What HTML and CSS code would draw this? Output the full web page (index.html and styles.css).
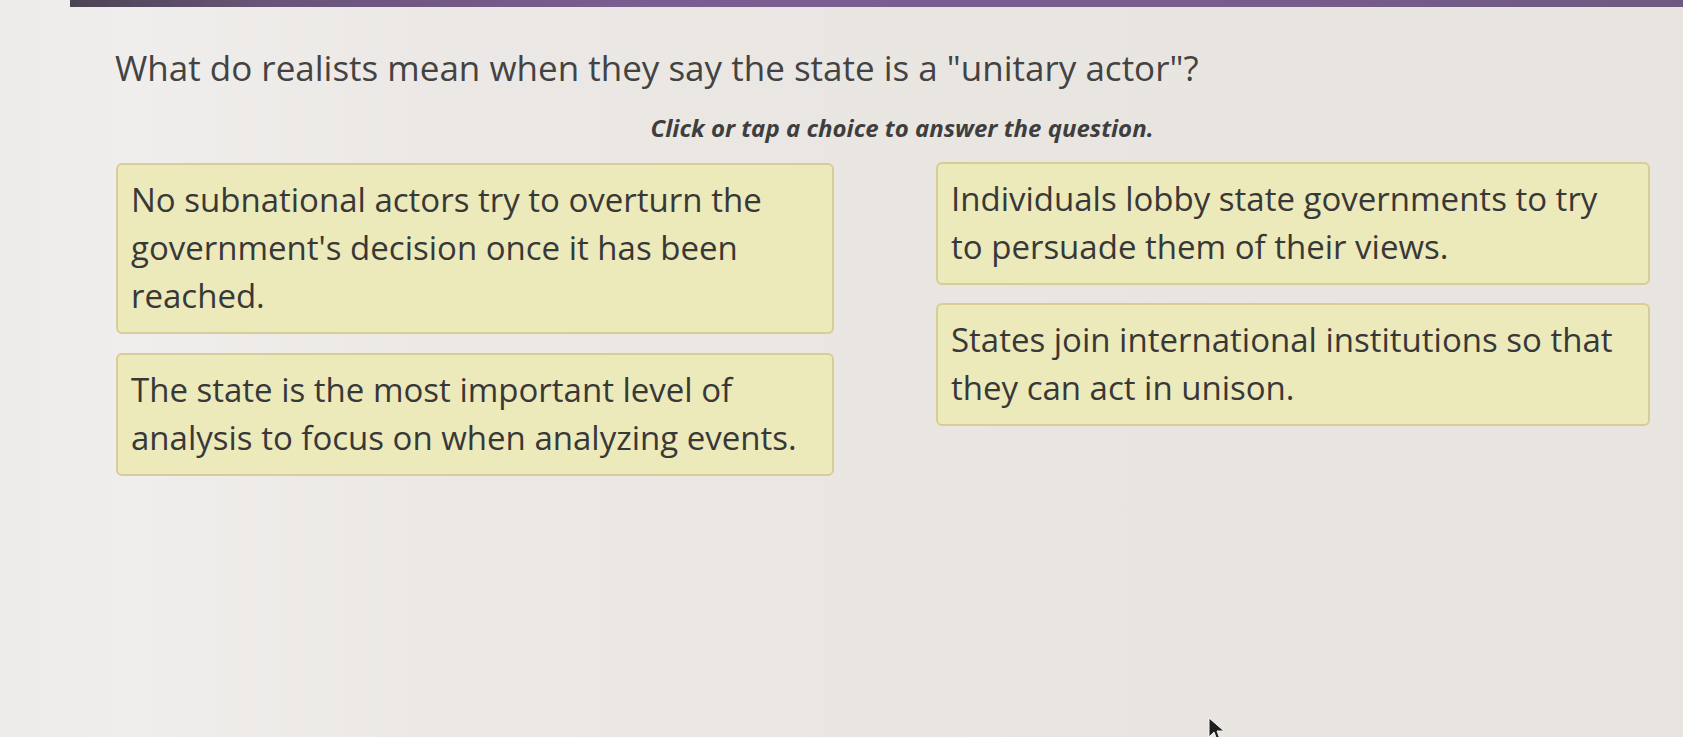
FILE: index.html
```html
<!DOCTYPE html>
<html lang="en">
<head>
<meta charset="utf-8">
<title>Question</title>
<link rel="stylesheet" href="styles.css">
</head>
<body>
<div class="topbar"></div>
<main class="page">
  <h1 class="question">What do realists mean when they say the state is a "unitary actor"?</h1>
  <p class="hint">Click or tap a choice to answer the question.</p>
  <div class="choices">
    <div class="column left">
      <div class="choice">No subnational actors try to overturn the government's decision once it has been reached.</div>
      <div class="choice">The state is the most important level of analysis to focus on when analyzing events.</div>
    </div>
    <div class="column right">
      <div class="choice">Individuals lobby state governments to try to persuade them of their views.</div>
      <div class="choice">States join international institutions so that they can act in unison.</div>
    </div>
  </div>
</main>
<svg class="cursor" width="20" height="24" viewBox="0 0 20 24"><path d="M2 1 L2 20 L7 15 L10 23 L13 22 L10 14 L17 14 Z" fill="#1e1e1e" stroke="#f4f4f4" stroke-width="1"/></svg>
</body>
</html>
```

FILE: styles.css
```css
html, body {
  margin: 0;
  padding: 0;
  height: 100%;
}
body {
  background: linear-gradient(90deg, #eeecea 0%, #f0eeec 8%, #ebe8e5 25%, #e9e6e2 60%, #e8e5e1 100%);
  font-family: "Open Sans", "Liberation Sans", sans-serif;
  color: #3a3a3a;
  overflow: hidden;
  position: relative;
}
.topbar {
  height: 7px;
  margin-left: 70px;
  background: linear-gradient(90deg, #4c4454 0%, #6a5478 12%, #7c5d92 35%, #7a5c8f 70%, #6e5a80 100%);
}
.page {
  padding-left: 116px;
  width: 1534px;
}
.question {
  margin: 41px 0 0 -1px;
  font-size: 35px;
  line-height: 40px;
  font-weight: 400;
  color: #434343;
}
.hint {
  margin: 26px 0 0 0;
  padding-left: 38px;
  text-align: center;
  font-size: 24px;
  line-height: 28px;
  font-weight: 700;
  font-style: italic;
  color: #3e3e3e;
}
.choices {
  margin-top: 21px;
  display: grid;
  grid-template-columns: 718px 714px;
  column-gap: 102px;
  align-items: start;
}
.column {
  display: flex;
  flex-direction: column;
  gap: 19px;
}
.right {
  margin-top: -1px;
  gap: 18px;
}
.choice {
  background: #ece9ba;
  border: 2px solid #d8cc97;
  border-radius: 6px;
  padding: 11px 13px 12px;
  font-size: 33px;
  line-height: 48px;
  color: #383838;
}
.cursor {
  position: absolute;
  left: 1207px;
  top: 717px;
}
```
